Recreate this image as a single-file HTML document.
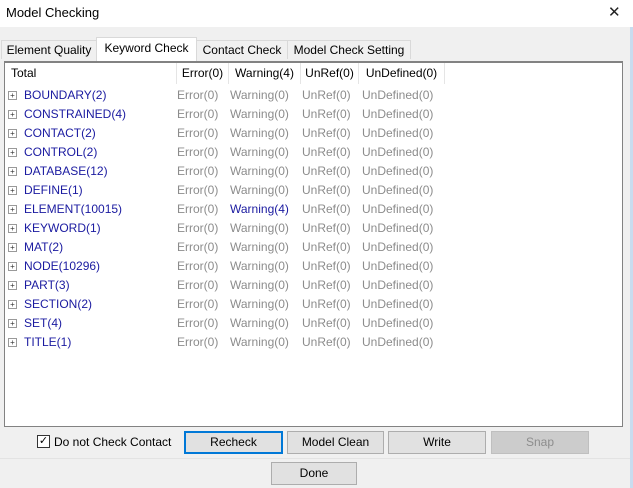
<!DOCTYPE html><html><head><style>
body{margin:0;width:633px;height:488px;background:#f0f0f0;font-family:"Liberation Sans",sans-serif;font-size:12px;position:relative;overflow:hidden}
.a{position:absolute;white-space:nowrap}
.title{left:0;top:0;width:633px;height:27px;background:#fff}
.tab{position:absolute;top:40px;height:18px;border:1px solid #d9d9d9;border-bottom:none;background:#f0f0f0;line-height:18px;text-align:center}
.list{left:4px;top:61px;width:617px;height:363px;background:#fff;border:1px solid #828282;border-top:2px solid #828282}
.btn{position:absolute;height:21px;border:1px solid #adadad;background:#e1e1e1;text-align:center;line-height:21px}
.r{position:absolute;height:19px;line-height:19px;left:0;width:617px}
.r span{position:absolute}
.pl{position:absolute;left:3px;top:5px;width:7px;height:7px;border:1px solid #999;font-size:8px;line-height:7px;text-align:center;color:#333;font-style:normal}
.g{color:#8c8c8c}
.b{color:#1a1aa0}
.h{position:absolute;top:0;height:21px;line-height:21px;border-right:1px solid #e5e5e5}
</style></head><body>
<div class="a title"></div>
<div class="a" style="left:6px;top:5px;font-size:13px">Model Checking</div>
<div class="a" style="left:608px;top:3px;font-size:15px;font-family:'DejaVu Sans',sans-serif;color:#222">✕</div>
<div class="a" style="left:630px;top:27px;width:3px;height:461px;background:#c9dcef"></div>
<div class="tab" style="left:1px;width:94px">Element Quality</div>
<div class="tab" style="left:96px;width:99px;top:37px;height:23px;background:#fff;z-index:2;line-height:20px">Keyword Check</div>
<div class="tab" style="left:196px;width:90px">Contact Check</div>
<div class="tab" style="left:287px;width:122px">Model Check Setting</div>
<div class="a list">
<div class="h" style="left:0;width:171px"><span style="padding-left:6px">Total</span></div>
<div class="h" style="left:172px;width:51px;text-align:center">Error(0)</div>
<div class="h" style="left:224px;width:71px;text-align:center">Warning(4)</div>
<div class="h" style="left:296px;width:57px;text-align:center">UnRef(0)</div>
<div class="h" style="left:354px;width:85px;text-align:center">UnDefined(0)</div>
</div>
<div class="a" style="left:5px;top:86px;width:617px">
<div class="r" style="top:0"><i class="pl">+</i><span class="b" style="left:19px">BOUNDARY(2)</span><span class="g" style="left:172px">Error(0)</span><span class="g" style="left:225px">Warning(0)</span><span class="g" style="left:297px">UnRef(0)</span><span class="g" style="left:357px">UnDefined(0)</span></div>
<div class="r" style="top:19px"><i class="pl">+</i><span class="b" style="left:19px">CONSTRAINED(4)</span><span class="g" style="left:172px">Error(0)</span><span class="g" style="left:225px">Warning(0)</span><span class="g" style="left:297px">UnRef(0)</span><span class="g" style="left:357px">UnDefined(0)</span></div>
<div class="r" style="top:38px"><i class="pl">+</i><span class="b" style="left:19px">CONTACT(2)</span><span class="g" style="left:172px">Error(0)</span><span class="g" style="left:225px">Warning(0)</span><span class="g" style="left:297px">UnRef(0)</span><span class="g" style="left:357px">UnDefined(0)</span></div>
<div class="r" style="top:57px"><i class="pl">+</i><span class="b" style="left:19px">CONTROL(2)</span><span class="g" style="left:172px">Error(0)</span><span class="g" style="left:225px">Warning(0)</span><span class="g" style="left:297px">UnRef(0)</span><span class="g" style="left:357px">UnDefined(0)</span></div>
<div class="r" style="top:76px"><i class="pl">+</i><span class="b" style="left:19px">DATABASE(12)</span><span class="g" style="left:172px">Error(0)</span><span class="g" style="left:225px">Warning(0)</span><span class="g" style="left:297px">UnRef(0)</span><span class="g" style="left:357px">UnDefined(0)</span></div>
<div class="r" style="top:95px"><i class="pl">+</i><span class="b" style="left:19px">DEFINE(1)</span><span class="g" style="left:172px">Error(0)</span><span class="g" style="left:225px">Warning(0)</span><span class="g" style="left:297px">UnRef(0)</span><span class="g" style="left:357px">UnDefined(0)</span></div>
<div class="r" style="top:114px"><i class="pl">+</i><span class="b" style="left:19px">ELEMENT(10015)</span><span class="g" style="left:172px">Error(0)</span><span class="b" style="left:225px">Warning(4)</span><span class="g" style="left:297px">UnRef(0)</span><span class="g" style="left:357px">UnDefined(0)</span></div>
<div class="r" style="top:133px"><i class="pl">+</i><span class="b" style="left:19px">KEYWORD(1)</span><span class="g" style="left:172px">Error(0)</span><span class="g" style="left:225px">Warning(0)</span><span class="g" style="left:297px">UnRef(0)</span><span class="g" style="left:357px">UnDefined(0)</span></div>
<div class="r" style="top:152px"><i class="pl">+</i><span class="b" style="left:19px">MAT(2)</span><span class="g" style="left:172px">Error(0)</span><span class="g" style="left:225px">Warning(0)</span><span class="g" style="left:297px">UnRef(0)</span><span class="g" style="left:357px">UnDefined(0)</span></div>
<div class="r" style="top:171px"><i class="pl">+</i><span class="b" style="left:19px">NODE(10296)</span><span class="g" style="left:172px">Error(0)</span><span class="g" style="left:225px">Warning(0)</span><span class="g" style="left:297px">UnRef(0)</span><span class="g" style="left:357px">UnDefined(0)</span></div>
<div class="r" style="top:190px"><i class="pl">+</i><span class="b" style="left:19px">PART(3)</span><span class="g" style="left:172px">Error(0)</span><span class="g" style="left:225px">Warning(0)</span><span class="g" style="left:297px">UnRef(0)</span><span class="g" style="left:357px">UnDefined(0)</span></div>
<div class="r" style="top:209px"><i class="pl">+</i><span class="b" style="left:19px">SECTION(2)</span><span class="g" style="left:172px">Error(0)</span><span class="g" style="left:225px">Warning(0)</span><span class="g" style="left:297px">UnRef(0)</span><span class="g" style="left:357px">UnDefined(0)</span></div>
<div class="r" style="top:228px"><i class="pl">+</i><span class="b" style="left:19px">SET(4)</span><span class="g" style="left:172px">Error(0)</span><span class="g" style="left:225px">Warning(0)</span><span class="g" style="left:297px">UnRef(0)</span><span class="g" style="left:357px">UnDefined(0)</span></div>
<div class="r" style="top:247px"><i class="pl">+</i><span class="b" style="left:19px">TITLE(1)</span><span class="g" style="left:172px">Error(0)</span><span class="g" style="left:225px">Warning(0)</span><span class="g" style="left:297px">UnRef(0)</span><span class="g" style="left:357px">UnDefined(0)</span></div>
</div>
<div class="a" style="left:37px;top:435px;width:11px;height:11px;border:1px solid #333;background:#fff;font-size:11px;line-height:11px;text-align:center">✓</div>
<div class="a" style="left:54px;top:435px">Do not Check Contact</div>
<div class="btn" style="left:184px;top:431px;width:95px;border:2px solid #0078d7;height:19px;line-height:19px">Recheck</div>
<div class="btn" style="left:287px;top:431px;width:95px">Model Clean</div>
<div class="btn" style="left:388px;top:431px;width:96px">Write</div>
<div class="btn" style="left:491px;top:431px;width:96px;background:#cccccc;border-color:#bfbfbf;color:#8d8d8d">Snap</div>
<div class="a" style="left:0;top:458px;width:630px;height:1px;background:#e3e3e3"></div>
<div class="btn" style="left:271px;top:462px;width:84px">Done</div>
</body></html>
